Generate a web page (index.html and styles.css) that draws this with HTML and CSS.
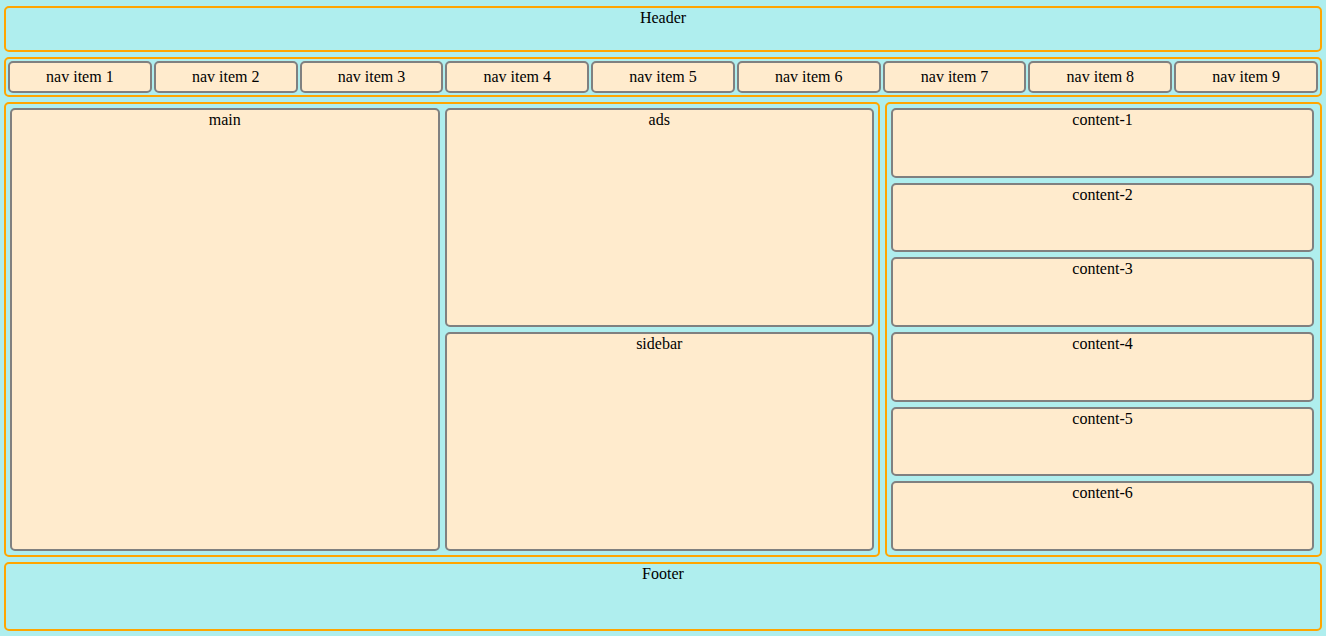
FILE: index.html
```html
<!DOCTYPE html>
<html>
<head>
<meta charset="utf-8">
<title>Layout</title>
<link rel="stylesheet" href="styles.css">
</head>
<body>
  <div class="page">
    <header class="box header">Header</header>
    <nav class="box nav">
      <div class="item nav-item">nav item 1</div>
      <div class="item nav-item">nav item 2</div>
      <div class="item nav-item">nav item 3</div>
      <div class="item nav-item">nav item 4</div>
      <div class="item nav-item">nav item 5</div>
      <div class="item nav-item">nav item 6</div>
      <div class="item nav-item">nav item 7</div>
      <div class="item nav-item">nav item 8</div>
      <div class="item nav-item">nav item 9</div>
    </nav>
    <div class="middle">
      <section class="box primary">
        <div class="item main">main</div>
        <div class="item ads">ads</div>
        <div class="item sidebar">sidebar</div>
      </section>
      <section class="box secondary">
        <div class="item content">content-1</div>
        <div class="item content">content-2</div>
        <div class="item content">content-3</div>
        <div class="item content">content-4</div>
        <div class="item content">content-5</div>
        <div class="item content">content-6</div>
      </section>
    </div>
    <footer class="box footer">Footer</footer>
  </div>
</body>
</html>
```

FILE: styles.css
```css
* {
  box-sizing: border-box;
}

html, body {
  margin: 0;
  padding: 0;
  height: 100%;
  background: #afeeee;
}

body {
  font-family: "Liberation Serif", "DejaVu Serif", serif;
  font-size: 16px;
  line-height: 20px;
  color: #000;
}

.page {
  height: 100vh;
  padding: 6px 4px 5px 4px;
  display: grid;
  grid-template-rows: 46px 40px 455px 1fr;
  gap: 5px;
}

.box {
  border: 2px solid #ffa500;
  border-radius: 5px;
  background: #afeeee;
  text-align: center;
}

.item {
  border: 2px solid #808080;
  border-radius: 5px;
  background: #ffebcd;
  text-align: center;
}

.nav {
  display: flex;
  gap: 2px;
  padding: 2px;
}

.nav-item {
  flex: 1;
  padding: 4px 0;
}

.middle {
  display: grid;
  grid-template-columns: 1fr 437px;
  gap: 5px;
}

.primary {
  display: grid;
  grid-template-columns: 1fr 1fr;
  grid-template-rows: 1fr 1fr;
  gap: 5px;
  padding: 4px;
}

.main {
  grid-row: 1 / 3;
}

.secondary {
  display: grid;
  grid-template-rows: repeat(6, 1fr);
  gap: 5px;
  padding: 4px 6px 4px 4px;
}
```
